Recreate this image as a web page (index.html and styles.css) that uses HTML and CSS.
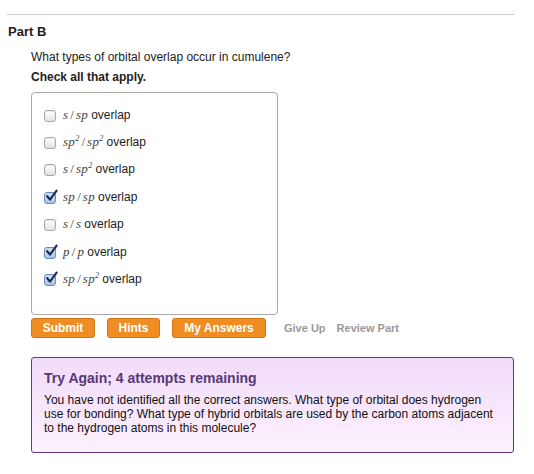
FILE: index.html
```html
<!DOCTYPE html>
<html>
<head>
<title>Part B</title>
<link rel="stylesheet" href="styles.css">
</head>
<body>

<div class="part">
  <h2 class="partTitle">Part B</h2>

  <div class="partBody">
    <p class="question">What types of orbital overlap occur in cumulene?</p>
    <p class="instruct">Check all that apply.</p>

    <ul class="choices">
      <li><span class="cb"></span><span class="math">s</span><span class="slash">/</span><span class="math">sp</span> overlap</li>
      <li><span class="cb"></span><span class="math">sp<sup>2</sup></span><span class="slash">/</span><span class="math">sp<sup>2</sup></span> overlap</li>
      <li><span class="cb"></span><span class="math">s</span><span class="slash">/</span><span class="math">sp<sup>2</sup></span> overlap</li>
      <li><span class="cb checked"><svg viewBox="0 0 12 12"><path d="M2.2 6.2 L5 9.6 L11.6 0.6" /></svg></span><span class="math">sp</span><span class="slash">/</span><span class="math">sp</span> overlap</li>
      <li><span class="cb"></span><span class="math">s</span><span class="slash">/</span><span class="math">s</span> overlap</li>
      <li><span class="cb checked"><svg viewBox="0 0 12 12"><path d="M2.2 6.2 L5 9.6 L11.6 0.6" /></svg></span><span class="math">p</span><span class="slash">/</span><span class="math">p</span> overlap</li>
      <li><span class="cb checked"><svg viewBox="0 0 12 12"><path d="M2.2 6.2 L5 9.6 L11.6 0.6" /></svg></span><span class="math">sp</span><span class="slash">/</span><span class="math">sp<sup>2</sup></span> overlap</li>
    </ul>

    <div class="actions">
      <a class="btn btnSubmit">Submit</a>
      <a class="btn btnHints">Hints</a>
      <a class="btn btnAnswers">My Answers</a>
      <a class="link">Give Up</a>
      <a class="link">Review Part</a>
    </div>

    <div class="feedback">
      <h3 class="feedbackTitle">Try Again; 4 attempts remaining</h3>
      <p class="feedbackText">You have not identified all the correct answers. What type of orbital does hydrogen use for bonding? What type of hybrid orbitals are used by the carbon atoms adjacent to the hydrogen atoms in this molecule?</p>
    </div>
  </div>
</div>

</body>
</html>
```

FILE: styles.css
```css
body {
  margin: 0;
  font-family: "Liberation Sans", Arial, sans-serif;
  font-size: 12px;
  color: #222222;
  background-color: #FFFFFF;
}
.part {
  margin: 14px 20px 0 7px;
  border-top: 1px solid #CCCCCC;
  padding-top: 9px;
}
.partTitle {
  margin: 0 0 0 1px;
  font-size: 13px;
  line-height: 16px;
  font-weight: bold;
  color: #222222;
}
.partBody {
  padding-left: 24px;
}
.question {
  margin: 10px 0 0 0;
  line-height: 14px;
}
.instruct {
  margin: 6px 0 0 0;
  line-height: 14px;
  font-weight: bold;
}
.choices {
  list-style: none;
  margin: 8px 0 0 0;
  padding: 8px 0 0 12px;
  width: 233px;
  height: 213px;
  border: 1px solid #AAAAAA;
  border-radius: 4px;
}
.choices li {
  display: flex;
  align-items: center;
  height: 27.4px;
  font-size: 12px;
}
.cb {
  display: inline-block;
  position: relative;
  width: 10px;
  height: 10px;
  margin-right: 7px;
  margin-top: 2px;
  border: 1px solid #A8A8A8;
  border-radius: 3px;
  background: linear-gradient(#FFFFFF, #E2E2E2);
  box-shadow: inset 0 1px 1px rgba(0, 0, 0, 0.08);
}
.cb svg {
  position: absolute;
  left: 0;
  top: -3px;
  width: 12px;
  height: 12px;
  overflow: visible;
}
.cb svg path {
  fill: none;
  stroke: #1B2D55;
  stroke-width: 2.2;
  stroke-linecap: round;
  stroke-linejoin: round;
}
.cb.checked {
  border-color: #6C8BB8;
  background: linear-gradient(#DCE8F7, #A9C4E6);
}
.math {
  font-family: "Liberation Serif", "Times New Roman", serif;
  font-style: italic;
  font-size: 13px;
  letter-spacing: 0.3px;
  color: #444444;
}
.math sup {
  font-size: 8px;
  vertical-align: 5px;
  line-height: 0;
}
.slash {
  font-family: "Liberation Serif", "Times New Roman", serif;
  font-size: 13px;
  color: #444444;
  margin: 0 2px;
}
.choices li .math:last-of-type {
  margin-right: 3px;
}
.actions {
  display: flex;
  align-items: center;
  margin-top: 2px;
  height: 21px;
}
.btn {
  display: inline-block;
  height: 18px;
  line-height: 18px;
  margin-right: 12px;
  border: 1px solid #D27516;
  border-radius: 3px;
  background-color: #EF8D22;
  color: #FFFFFF;
  font-weight: bold;
  font-size: 12px;
  text-align: center;
  cursor: pointer;
}
.btnSubmit {
  width: 62px;
}
.btnHints {
  width: 51px;
}
.btnAnswers {
  width: 92px;
  margin-right: 18px;
}
.link {
  color: #9A9A9A;
  font-weight: bold;
  font-size: 11px;
  margin-right: 11px;
  cursor: pointer;
}
.feedback {
  margin-top: 19px;
  width: 457px;
  height: 82px;
  padding: 12px 12px 0 12px;
  border: 1px solid #6A3290;
  border-radius: 3px;
  background: linear-gradient(#F1DBFB, #FDF1FE);
}
.feedbackTitle {
  margin: 0;
  font-size: 14px;
  line-height: 16px;
  font-weight: bold;
  color: #583877;
}
.feedbackText {
  margin: 7px 0 0 0;
  line-height: 14px;
  font-size: 12px;
  color: #111111;
}
```
